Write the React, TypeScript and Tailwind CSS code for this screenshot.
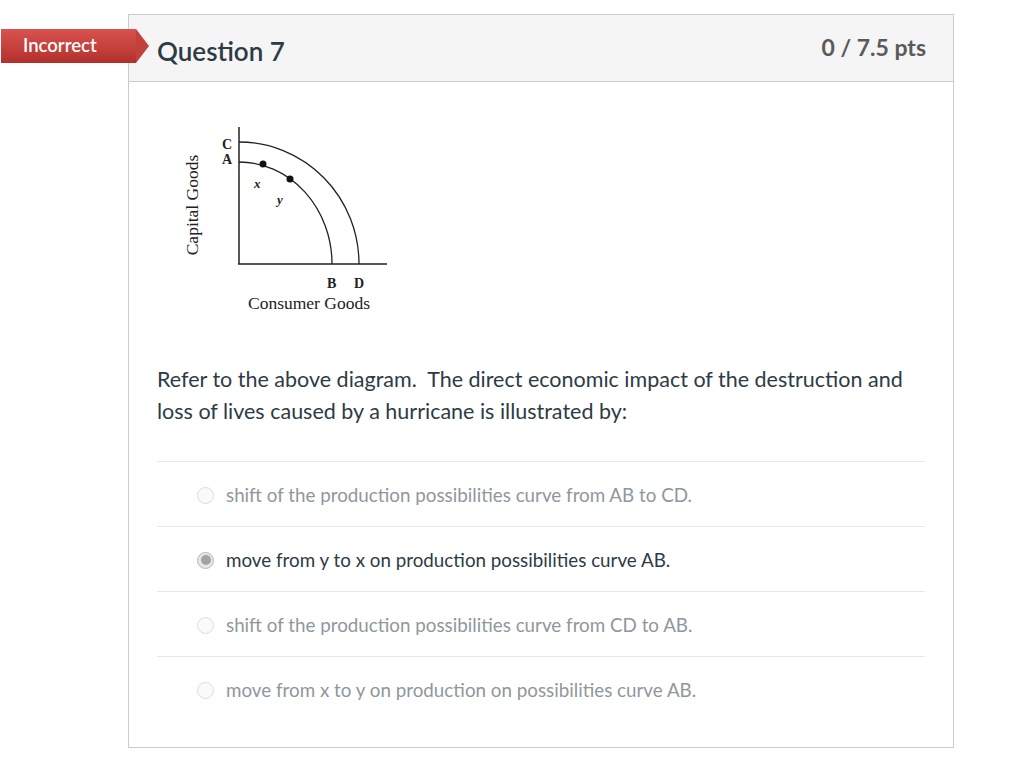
import React from 'react';

const answers = [
  { text: 'shift of the production possibilities curve from AB to CD.', selected: false },
  { text: 'move from y to x on production possibilities curve AB.', selected: true },
  { text: 'shift of the production possibilities curve from CD to AB.', selected: false },
  { text: 'move from x to y on production on possibilities curve AB.', selected: false },
];

function Diagram() {
  // svg origin = page (170,120)
  const serif = { fontFamily: '"Liberation Serif", "DejaVu Serif", serif' };
  return (
    <svg width="230" height="200" viewBox="0 0 230 200" style={serif}>
      <line x1="69" y1="7" x2="69" y2="144" stroke="#222" strokeWidth="1.5" />
      <line x1="68" y1="144" x2="217" y2="144" stroke="#222" strokeWidth="1.5" />
      <path d="M69 22 A120 122 0 0 1 189 144" fill="none" stroke="#222" strokeWidth="1.3" />
      <path d="M69 42 A93 102 0 0 1 162 144" fill="none" stroke="#222" strokeWidth="1.3" />
      <circle cx="93" cy="44" r="3.5" fill="#111" />
      <circle cx="120" cy="59" r="3.5" fill="#111" />
      <text x="52" y="29" fontSize="14" fontWeight="bold" fill="#222">C</text>
      <text x="52" y="44" fontSize="14" fontWeight="bold" fill="#222">A</text>
      <text x="84" y="68" fontSize="13" fontStyle="italic" fontWeight="bold" fill="#222">x</text>
      <text x="107" y="84" fontSize="13" fontStyle="italic" fontWeight="bold" fill="#222">y</text>
      <text x="157" y="168" fontSize="14" fontWeight="bold" fill="#222">B</text>
      <text x="184" y="168" fontSize="14" fontWeight="bold" fill="#222">D</text>
      <text x="139" y="189" fontSize="17.5" textAnchor="middle" fill="#222">Consumer Goods</text>
      <text x="0" y="0" fontSize="17.5" textAnchor="middle" fill="#222" transform="translate(28 85) rotate(-90)">Capital Goods</text>
    </svg>
  );
}

function Radio({ selected }: { selected: boolean }) {
  if (selected) {
    return (
      <span className="flex h-[17px] w-[17px] shrink-0 items-center justify-center rounded-full border border-[#b8b8b8] bg-[#e6e6e6]">
        <span className="h-[10px] w-[10px] rounded-full bg-[#a3a3a3]" />
      </span>
    );
  }
  return <span className="h-[17px] w-[17px] shrink-0 rounded-full border border-[#dcdcdc] bg-[#fafafa]" />;
}

export default function App() {
  return (
    <div className="min-h-[760px] bg-white pl-[128px] pt-[14px]" style={{ fontFamily: 'Lato, "Open Sans", sans-serif' }}>
      <div className="relative w-[826px] border border-[#c7cdd1]">
        <div className="absolute left-[-128px] top-[14px] flex h-[34px] w-[148px] items-center">
          <div className="flex h-full w-[135px] items-center bg-gradient-to-b from-[#d9534f] to-[#b2302c] pl-[22px] text-[18.5px] font-semibold text-white">
            Incorrect
          </div>
          <div className="h-0 w-0 border-y-[17px] border-l-[13px] border-y-transparent border-l-[#c4403b]" />
        </div>
        <div className="flex h-[67px] items-center justify-between border-b border-[#c7cdd1] bg-[#f5f5f5] pl-[28px] pr-[27px]">
          <h2 className="pt-[6px] text-[26px] font-semibold text-[#2d3b45]">Question 7</h2>
          <div className="self-start pt-[15px] text-[23px] font-bold text-[#5a5a5a]">0 / 7.5 pts</div>
        </div>
        <div className="px-[28px] pb-[26px]">
          <div className="ml-[13px] mt-[38px]">
            <Diagram />
          </div>
          <p className="mt-[43px] text-[21.5px] leading-[32px] text-[#2d3b45]">
            Refer to the above diagram.&nbsp; The direct economic impact of the destruction and loss of lives caused by a hurricane is illustrated by:
          </p>
          <div className="mt-[34px]">
            {answers.map((a, i) => (
              <div key={i} className="flex h-[65px] items-center gap-[12px] border-t border-[#e6e8ea] pl-[40px] pt-[2px]">
                <Radio selected={a.selected} />
                <span className={`text-[18.8px] ${a.selected ? 'text-[#2d3b45]' : 'text-[#8f979d]'}`}>{a.text}</span>
              </div>
            ))}
          </div>
        </div>
      </div>
    </div>
  );
}
